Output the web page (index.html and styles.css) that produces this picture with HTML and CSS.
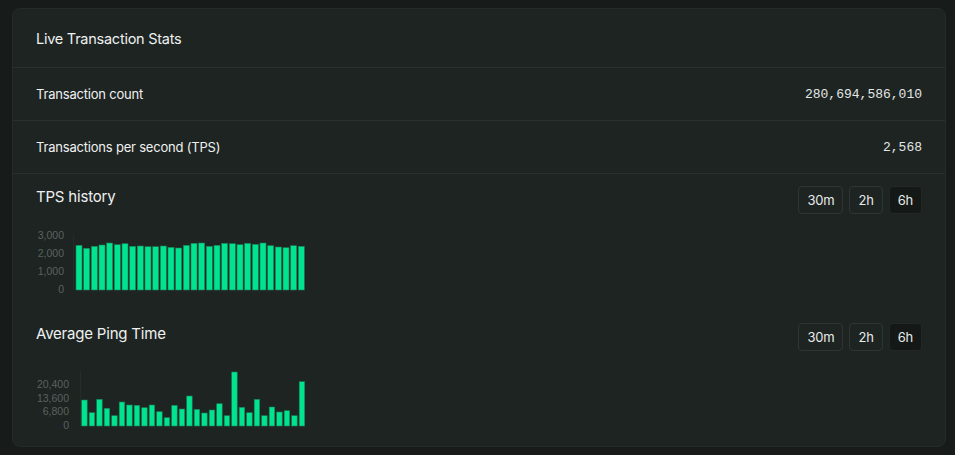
FILE: index.html
```html
<!DOCTYPE html>
<html>
<head>
<meta charset="utf-8">
<link rel="stylesheet" href="styles.css">
</head>
<body>
<div class="card">
  <div class="card-header">Live Transaction Stats</div>
  <div class="row">
    <span class="label">Transaction count</span>
    <span class="value">280,694,586,010</span>
  </div>
  <div class="row">
    <span class="label">Transactions per second (TPS)</span>
    <span class="value">2,568</span>
  </div>
  <div class="charts">
    <div class="chart-block">
      <div class="chart-head">
        <span class="chart-title">TPS history</span>
        <div class="btns">
          <button class="btn">30m</button>
          <button class="btn">2h</button>
          <button class="btn active">6h</button>
        </div>
      </div>
      <svg class="chart" width="272" height="64" viewBox="0 0 272 64">
        <line x1="37.5" y1="6" x2="37.5" y2="61" class="axis"/>
        <g class="ticks">
          <text x="28" y="10">3,000</text>
          <text x="28" y="28">2,000</text>
          <text x="28" y="46">1,000</text>
          <text x="28" y="64">0</text>
        </g>
        <g class="bars" id="tps"></g>
      </svg>
    </div>
    <div class="chart-block second">
      <div class="chart-head">
        <span class="chart-title">Average Ping Time</span>
        <div class="btns">
          <button class="btn">30m</button>
          <button class="btn">2h</button>
          <button class="btn active">6h</button>
        </div>
      </div>
      <svg class="chart" width="272" height="64" viewBox="0 0 272 64">
        <line x1="44.5" y1="6" x2="44.5" y2="61" class="axis"/>
        <g class="ticks">
          <text x="33" y="23">20,400</text>
          <text x="33" y="37">13,600</text>
          <text x="33" y="50">6,800</text>
          <text x="33" y="64">0</text>
        </g>
        <g class="bars" id="ping"></g>
      </svg>
    </div>
  </div>
</div>
<script src="app.js"></script>
</body>
</html>
```

FILE: app.js
```js
(function () {
  var NS = "http://www.w3.org/2000/svg";
  function draw(id, heights, x0, pitch, w, base) {
    var g = document.getElementById(id);
    heights.forEach(function (h, i) {
      var r = document.createElementNS(NS, "rect");
      r.setAttribute("x", (x0 + i * pitch).toFixed(2));
      r.setAttribute("y", (base - h).toFixed(2));
      r.setAttribute("width", w);
      r.setAttribute("height", h.toFixed(2));
      g.appendChild(r);
    });
  }
  var tps = [44.7,41.7,43.7,45,47,45.3,46.3,43.7,44,43.3,43.3,44,42.7,42,44.7,
             46.7,47,43.7,44.7,46.7,46.3,45.3,46.7,45.7,47,44.3,43,42.3,44.3,43.7];
  var ping = [26,13.3,26.7,17.7,10.3,24,21,20.7,18.3,21,14.3,8.3,20.7,17,30,
              16.7,13,16,22.3,10.3,54,18.7,13.3,26.7,10.3,19,14,15.3,10.3,44.3];
  draw("tps", tps, 40, 7.667, 6, 61);
  draw("ping", ping, 45.7, 7.5, 5.5, 61);
})();
```

FILE: styles.css
```css
html, body {
  margin: 0;
  padding: 0;
}
body {
  background: #171b1a;
  padding: 8px 9px 8px 12px;
  font-family: Inter, "Noto Sans", sans-serif;
  color: #e6ebe9;
}
.card {
  background: #1e2422;
  border: 1px solid #252b29;
  border-radius: 8px;
  box-sizing: border-box;
  height: 439px;
  display: flex;
  flex-direction: column;
}
.card-header {
  height: 58px;
  display: flex;
  align-items: center;
  padding: 0 23px;
  font-size: 14.5px;
  letter-spacing: -0.25px;
  color: #eef1f0;
  border-bottom: 1px solid #2a302e;
  flex-shrink: 0;
}
.row {
  height: 52px;
  flex-shrink: 0;
  display: flex;
  align-items: center;
  justify-content: space-between;
  padding: 0 23px;
  border-bottom: 1px solid #2a302e;
  font-size: 13px;
}
.label {
  color: #eef1f0;
  letter-spacing: -0.2px;
}
.value {
  font-family: "Liberation Mono", monospace;
  font-size: 13px;
  color: #e2e7e5;
}
.charts {
  padding: 12px 23px 0;
}
.chart-head {
  height: 28px;
  display: flex;
  align-items: center;
  justify-content: space-between;
}
.chart-title {
  font-size: 15px;
  letter-spacing: -0.2px;
  color: #eef1f0;
  padding-bottom: 7px;
}
.btns {
  display: flex;
  gap: 6px;
}
.btn {
  height: 28px;
  box-sizing: border-box;
  padding: 0 8px;
  background: transparent;
  border: 1px solid #2f3533;
  border-radius: 4px;
  color: #e6ebe9;
  font-family: Inter, "Noto Sans", sans-serif;
  font-size: 13px;
  letter-spacing: -0.2px;
  cursor: pointer;
}
.btn.active {
  background: #141817;
  border-color: #232827;
}
.chart {
  display: block;
  margin-top: 15px;
  overflow: visible;
}
.chart-block.second {
  margin-top: 30px;
}
.chart-block.second .chart {
  margin-top: 14px;
}
.ticks text {
  font-family: "Liberation Sans", Arial, sans-serif;
  font-size: 10.5px;
  fill: #5b615f;
  text-anchor: end;
}
.axis {
  stroke: #262c2a;
  stroke-width: 1;
}
.bars rect {
  fill: #00e38f;
  stroke: #1b7d58;
  stroke-width: 0.6;
}
```
